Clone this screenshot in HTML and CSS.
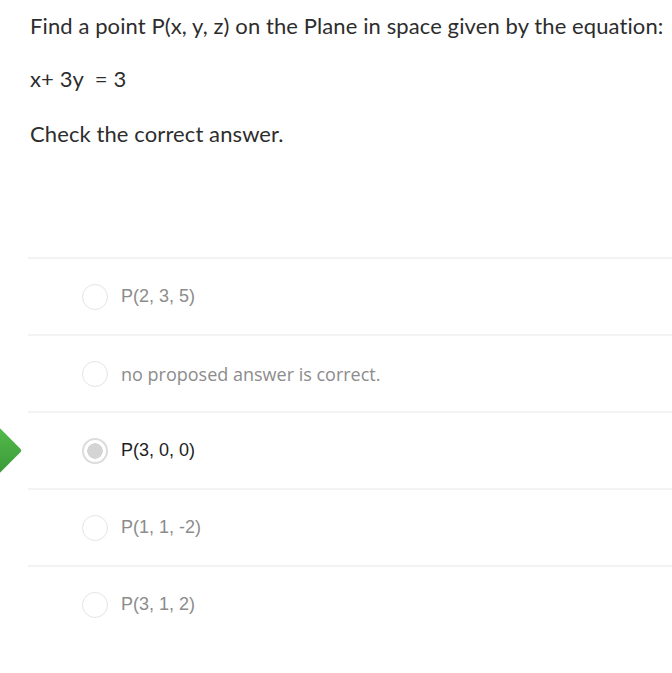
FILE: index.html
```html
<!DOCTYPE html>
<html>
<head>
<meta charset="utf-8">
<link rel="stylesheet" href="styles.css">
</head>
<body>
<div class="page">
  <div class="question">
    <p class="q-line q-first">Find a point P(x, y, z) on the Plane in space given by the equation:</p>
    <p class="q-line q-eq">x+ 3y &nbsp;= 3</p>
    <p class="q-line q-check">Check the correct answer.</p>
  </div>
  <div class="answers">
    <div class="answer"><span class="radio"></span><span class="label">P(2, 3, 5)</span></div>
    <div class="answer"><span class="radio"></span><span class="label sans">no proposed answer is correct.</span></div>
    <div class="answer selected"><span class="marker"></span><span class="radio"></span><span class="label">P(3, 0, 0)</span></div>
    <div class="answer"><span class="radio"></span><span class="label">P(1, 1, -2)</span></div>
    <div class="answer last"><span class="radio"></span><span class="label">P(3, 1, 2)</span></div>
  </div>
</div>
</body>
</html>
```
FILE: styles.css
```css
html, body {
  margin: 0;
  padding: 0;
  background: #ffffff;
  width: 672px;
  height: 673px;
  overflow: hidden;
}
.page {
  font-family: "Lato", "Liberation Sans", sans-serif;
  color: #2d2d2d;
}
.question {
  padding: 12px 0 0 30px;
}
.q-line {
  margin: 0;
  font-size: 22px;
  line-height: 28px;
  white-space: nowrap;
  letter-spacing: 0.1px;
}
.q-eq {
  margin-top: 25px;
}
.q-check {
  margin-top: 27px;
}
.answers {
  margin: 109px 0 0 28px;
  border-top: 2px solid #f3f3f3;
}
.answer {
  position: relative;
  display: flex;
  align-items: center;
  height: 75px;
  padding-left: 54px;
  border-bottom: 2px solid #f3f3f3;
  gap: 13px;
}
.answer.last {
  border-bottom: none;
}
.radio {
  width: 26px;
  height: 26px;
  border-radius: 50%;
  border: 1px solid #e4e4e4;
  background: #fff;
  box-sizing: border-box;
  flex: none;
}
.selected .radio {
  border: 2px solid #dcdcdc;
  background: radial-gradient(circle, #d4d4d4 0 7.5px, #ffffff 8px);
}
.label {
  font-family: "Liberation Sans", Arial, sans-serif;
  font-size: 18px;
  color: #8c8c8c;
}
.label.sans {
  font-family: "Open Sans", sans-serif;
  font-size: 18px;
}
.selected .label {
  color: #1e1e1e;
}
.marker {
  position: absolute;
  left: -48px;
  top: 20px;
  width: 35px;
  height: 35px;
  background: linear-gradient(135deg, #52ba4c, #3b9a37);
  transform: rotate(45deg);
  border-radius: 3px;
}
```
